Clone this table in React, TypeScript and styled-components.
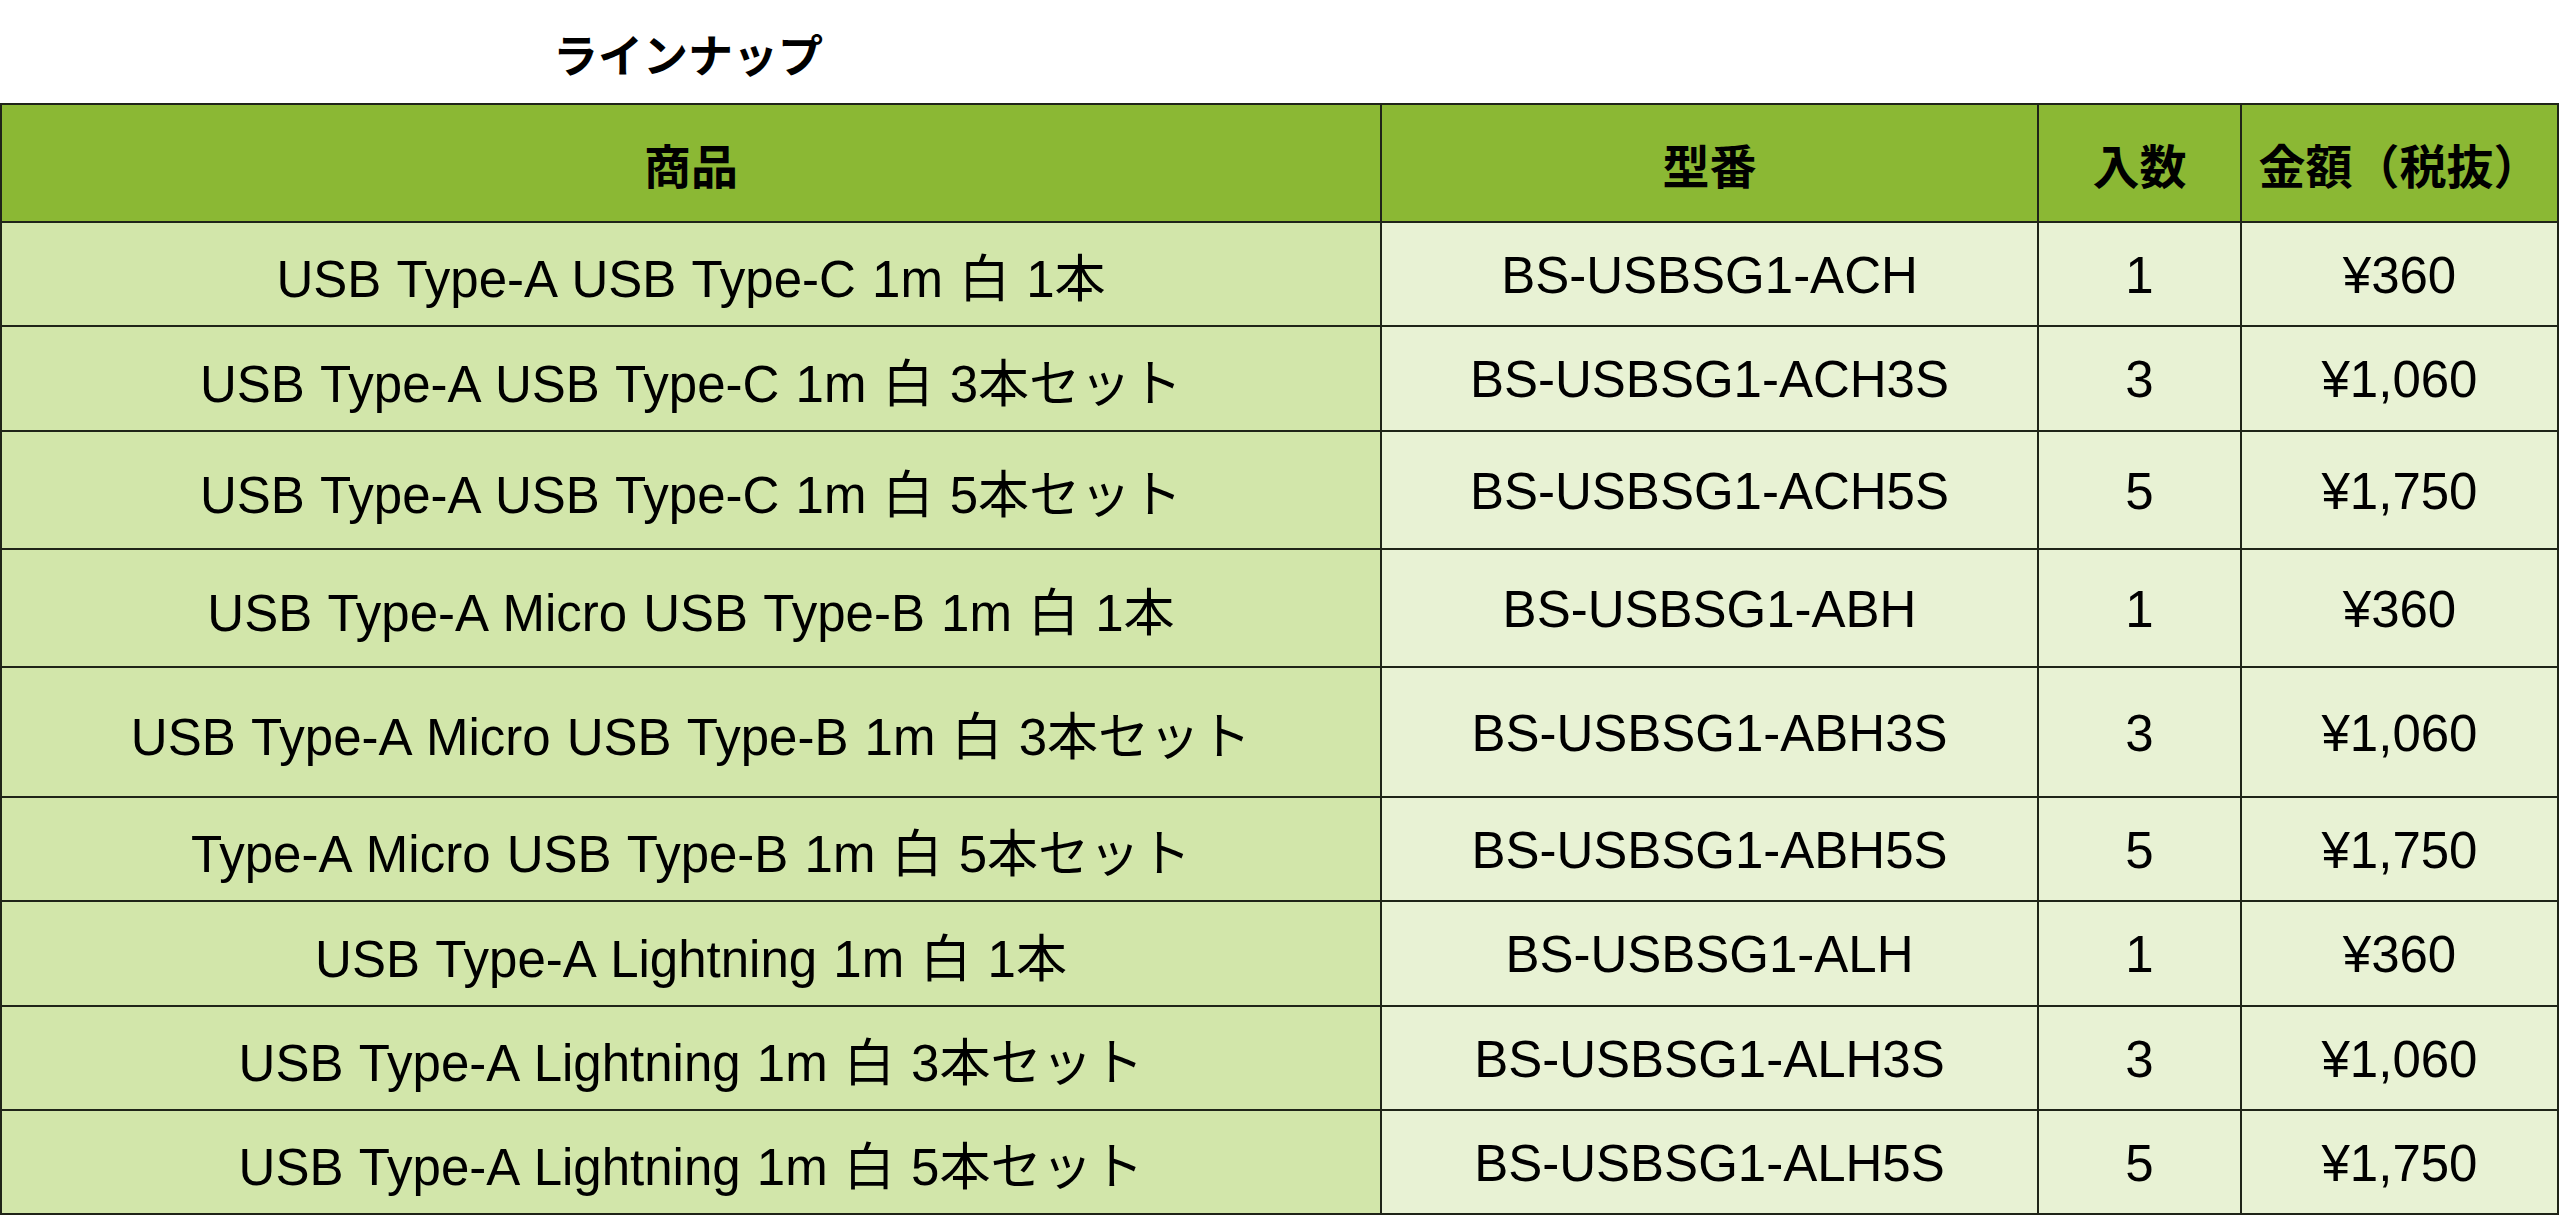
import React from 'react';
import styled, { createGlobalStyle } from 'styled-components';

const GlobalStyle = createGlobalStyle`
  html, body {
    margin: 0;
    padding: 0;
    background: #ffffff;
  }
  body {
    font-family: "Liberation Sans", "Noto Sans CJK JP", sans-serif;
    color: #000;
  }
`;

const Page = styled.div`
  width: 2560px;
`;

const TitleBar = styled.div`
  height: 103px;
  display: flex;
  align-items: center;
  padding: 4px 0 0 553px;
  box-sizing: border-box;
`;

const Title = styled.h2`
  margin: 0;
  font-family: "Noto Sans CJK JP", sans-serif;
  font-weight: 700;
  font-size: 45px;
  line-height: 1;
`;

const Table = styled.div`
  width: 2559px;
  border-top: 2px solid #1f2418;
  border-left: 2px solid #1f2418;
  box-sizing: border-box;
`;

const Row = styled.div<{ $height: number }>`
  display: grid;
  grid-template-columns: 1380px 657px 203px 317px;
  height: ${(p) => p.$height}px;
`;

const Cell = styled.div<{ $bg: string }>`
  display: flex;
  align-items: center;
  justify-content: center;
  background: ${(p) => p.$bg};
  border-right: 2px solid #1f2418;
  border-bottom: 2px solid #1f2418;
  font-size: 51px;
  word-spacing: 2px;
  white-space: nowrap;
  padding-top: 2px;
  box-sizing: border-box;
`;

const HeadCell = styled(Cell)`
  font-family: "Noto Sans CJK JP", sans-serif;
  font-weight: 700;
  font-size: 47px;
  padding-top: 0;
`;

const HEAD_BG = '#8bb834';
const NAME_BG = '#d2e6aa';
const BODY_BG = '#e8f2d4';

interface Item {
  name: string;
  model: string;
  qty: string;
  price: string;
  height: number;
}

const items: Item[] = [
  { name: 'USB Type-A USB Type-C 1m 白 1本', model: 'BS-USBSG1-ACH', qty: '1', price: '¥360', height: 104 },
  { name: 'USB Type-A USB Type-C 1m 白 3本セット', model: 'BS-USBSG1-ACH3S', qty: '3', price: '¥1,060', height: 105 },
  { name: 'USB Type-A USB Type-C 1m 白 5本セット', model: 'BS-USBSG1-ACH5S', qty: '5', price: '¥1,750', height: 118 },
  { name: 'USB Type-A Micro USB Type-B 1m 白 1本', model: 'BS-USBSG1-ABH', qty: '1', price: '¥360', height: 118 },
  { name: 'USB Type-A Micro USB Type-B 1m 白 3本セット', model: 'BS-USBSG1-ABH3S', qty: '3', price: '¥1,060', height: 130 },
  { name: 'Type-A Micro USB Type-B 1m 白 5本セット', model: 'BS-USBSG1-ABH5S', qty: '5', price: '¥1,750', height: 104 },
  { name: 'USB Type-A Lightning 1m 白 1本', model: 'BS-USBSG1-ALH', qty: '1', price: '¥360', height: 105 },
  { name: 'USB Type-A Lightning 1m 白 3本セット', model: 'BS-USBSG1-ALH3S', qty: '3', price: '¥1,060', height: 104 },
  { name: 'USB Type-A Lightning 1m 白 5本セット', model: 'BS-USBSG1-ALH5S', qty: '5', price: '¥1,750', height: 104 },
];

export default function App() {
  return (
    <Page>
      <GlobalStyle />
      <TitleBar>
        <Title>ラインナップ</Title>
      </TitleBar>
      <Table>
        <Row $height={118}>
          <HeadCell $bg={HEAD_BG}>商品</HeadCell>
          <HeadCell $bg={HEAD_BG}>型番</HeadCell>
          <HeadCell $bg={HEAD_BG}>入数</HeadCell>
          <HeadCell $bg={HEAD_BG}>金額（税抜）</HeadCell>
        </Row>
        {items.map((item) => (
          <Row key={item.model} $height={item.height}>
            <Cell $bg={NAME_BG}>{item.name}</Cell>
            <Cell $bg={BODY_BG}>{item.model}</Cell>
            <Cell $bg={BODY_BG}>{item.qty}</Cell>
            <Cell $bg={BODY_BG}>{item.price}</Cell>
          </Row>
        ))}
      </Table>
    </Page>
  );
}
